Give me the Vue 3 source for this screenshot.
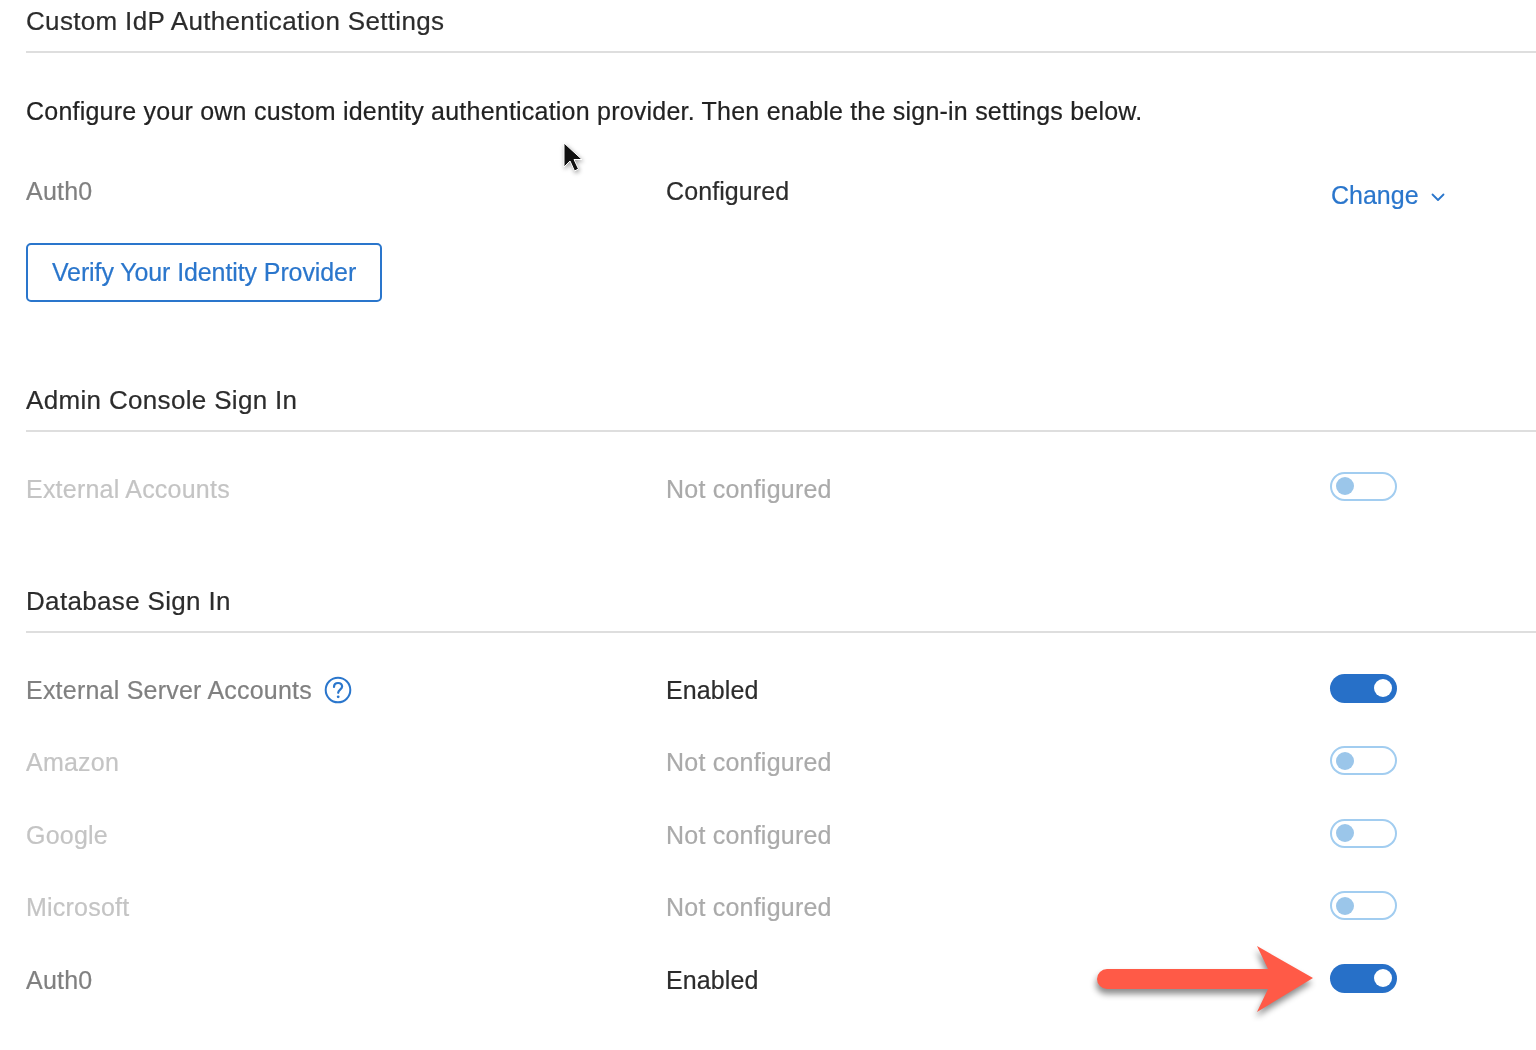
<template>
  <div class="page">
    <section class="idp">
      <h3 class="title">Custom IdP Authentication Settings</h3>
      <p class="intro">Configure your own custom identity authentication provider. Then enable the sign-in settings below.</p>
      <div class="row idp-row">
        <span class="label">Auth0</span>
        <span class="status">Configured</span>
        <a class="change">
          Change
          <svg width="14" height="9" viewBox="0 0 14 9" fill="none"><path d="M1.5 1.5 7 7l5.500-5.500" stroke="#2a76cc" stroke-width="1.800" stroke-linecap="round" stroke-linejoin="round" /></svg>
        </a>
      </div>
      <button class="verify">Verify Your Identity Provider</button>
    </section>

    <section class="admin">
      <h3 class="title">Admin Console Sign In</h3>
      <div class="row admin-row">
        <span class="label off">External Accounts</span>
        <span class="status off">Not configured</span>
        <span class="toggle disabled"><i></i></span>
      </div>
    </section>

    <section class="database">
      <h3 class="title">Database Sign In</h3>
      <div class="rows">
        <div v-for="item in signIns" :key="item.name" class="row db-row">
          <span class="label" :class="{ off: !item.on }">
            {{ item.name }}
            <svg v-if="item.help" class="help" width="28" height="28" viewBox="0 0 28 28" fill="none">
              <circle cx="14" cy="14" r="12.300" stroke="#2a76cc" stroke-width="2" />
              <path d="M10 11c0-2.500 1.800-4 4.100-4 2.300 0 4 1.500 4 3.600 0 3-3.900 3.200-3.900 6.200" stroke="#2a76cc" stroke-width="2.200" stroke-linecap="round" />
              <circle cx="14.200" cy="20.800" r="1.400" fill="#2a76cc" />
            </svg>
          </span>
          <span class="status" :class="{ off: !item.on }">{{ item.on ? 'Enabled' : 'Not configured' }}</span>
          <span class="toggle" :class="item.on ? 'on' : 'disabled'"><i></i></span>
        </div>
      </div>
    </section>

    <!-- mouse pointer from the screen recording -->
    <svg class="cursor" width="24" height="36" viewBox="0 0 24 36">
      <path d="M1 1v24l6-6 4.500 10 4-2-4.500-9.500H19Z" fill="#111" stroke="#fff" stroke-width="1" />
    </svg>

    <!-- red callout arrow -->
    <svg class="arrow" width="240" height="90" viewBox="0 0 240 90" fill="none">
      <path d="M21 29H182L171 6 227 38 171 72 182 49H21a10 10 0 0 1 0-20Z" fill="#ff5a47" />
    </svg>
  </div>
</template>

<script setup>
const signIns = [
  { name: 'External Server Accounts', on: true, help: true },
  { name: 'Amazon', on: false },
  { name: 'Google', on: false },
  { name: 'Microsoft', on: false },
  { name: 'Auth0', on: true }
]
</script>

<style>
html,
body {
  background: #fff;
}
</style>

<style scoped>
.page {
  position: relative;
  height: 1050px;
  overflow: hidden;
  padding-left: 26px;
  box-sizing: border-box;
  font-family: "Liberation Sans", Arial, sans-serif;
  font-size: 25px;
  letter-spacing: 0.22px;
  color: #222;
  -webkit-text-stroke: 0.2px;
  filter: blur(0.5px);
}

.title {
  margin: 0;
  height: 53px;
  line-height: 43px;
  font-size: 26px;
  font-weight: 400;
  letter-spacing: 0.33px;
  color: #2c2c2c;
  border-bottom: 2px solid #dedede;
  box-sizing: border-box;
}

.intro {
  margin: 0;
  padding-top: 42px;
  line-height: 32px;
}

.row {
  display: grid;
  grid-template-columns: 640px 664px auto;
  align-items: center;
}

.idp {
  height: 350px;
}

.idp-row {
  height: 32px;
  margin-top: 48px;
}

.admin {
  height: 201px;
  padding-top: 29px;
}

.admin .title,
.database .title {
  line-height: 42px;
}

.admin-row {
  margin-top: 41px;
  height: 32px;
}

.admin-row .toggle {
  top: -3px;
}

.rows {
  display: flex;
  flex-direction: column;
  padding-top: 21px;
}

.db-row {
  height: 72.500px;
}

.label {
  color: #808080;
  display: flex;
  align-items: center;
}

.status {
  color: #2c2c2c;
  letter-spacing: 0.1px;
}

.off {
  color: #c4c4c4;
}

.status.off {
  color: #aaa;
  letter-spacing: 0.22px;
}

.help {
  margin-left: 12px;
}

.change {
  display: flex;
  align-items: center;
  gap: 12px;
  color: #2a76cc;
  letter-spacing: 0;
  position: relative;
  top: 4px;
  left: 1px;
}

.change svg {
  margin-top: 4px;
}

.verify {
  display: block;
  margin-top: 36px;
  width: 356px;
  height: 59px;
  padding: 0;
  font: inherit;
  letter-spacing: -0.1px;
  color: #2a76cc;
  background: #fff;
  border: 2px solid #2a76cc;
  border-radius: 5px;
}

.toggle {
  display: flex;
  align-items: center;
  width: 67px;
  height: 29px;
  padding: 0 5px;
  border-radius: 15px;
  box-sizing: border-box;
  position: relative;
  top: -2px;
}

.toggle i {
  width: 18px;
  height: 18px;
  border-radius: 50%;
}

.toggle.on {
  background: #2770c8;
  justify-content: flex-end;
}

.toggle.on i {
  background: #fff;
}

.toggle.disabled {
  padding: 0 4px;
  border: 2px solid #a2cdf0;
}

.toggle.disabled i {
  background: #9bc6ea;
}

.cursor {
  position: absolute;
  left: 563px;
  top: 142px;
  filter: drop-shadow(1px 2px 2px rgba(0, 0, 0, 0.35));
}

.arrow {
  position: absolute;
  left: 1086px;
  top: 940px;
  filter: drop-shadow(-1px 5px 3px rgba(0, 0, 0, 0.45));
}
</style>
